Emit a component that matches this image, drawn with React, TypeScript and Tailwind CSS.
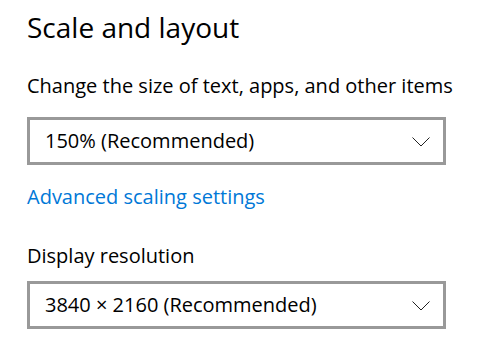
import { JSX } from "react";

function Chevron(): JSX.Element {
  return (
    <svg width="20" height="11" viewBox="0 0 20 11" className="shrink-0">
      <path d="M1.5 1.5 L10 10 L18.5 1.5" fill="none" stroke="#222222" strokeWidth="1" />
    </svg>
  );
}

function Dropdown({ value }: { value: string }): JSX.Element {
  return (
    <div className="w-[419px] h-[48px] border-[3px] border-[#999999] bg-white flex flex-row items-center justify-between pl-[15px] pr-[12px]">
      <span className="text-[20px] text-black leading-none">{value}</span>
      <Chevron />
    </div>
  );
}

export default function App(): JSX.Element {
  return (
    <div
      className="w-[501px] h-[348px] bg-white pl-[27px] overflow-hidden"
      style={{ fontFamily: '"Segoe UI", "Open Sans", "Noto Sans", sans-serif' }}
    >
      <h1 className="text-[28px] text-black leading-none pt-[13px] h-[76px]">
        Scale and layout
      </h1>
      <p className="text-[20px] text-black leading-none h-[41px]">
        Change the size of text, apps, and other items
      </p>
      <Dropdown value="150% (Recommended)" />
      <a className="block text-[20px] text-[#0078d7] leading-none pt-[22px] h-[81px]">
        Advanced scaling settings
      </a>
      <p className="text-[20px] text-black leading-none h-[35px]">
        Display resolution
      </p>
      <Dropdown value="3840 × 2160 (Recommended)" />
    </div>
  );
}
